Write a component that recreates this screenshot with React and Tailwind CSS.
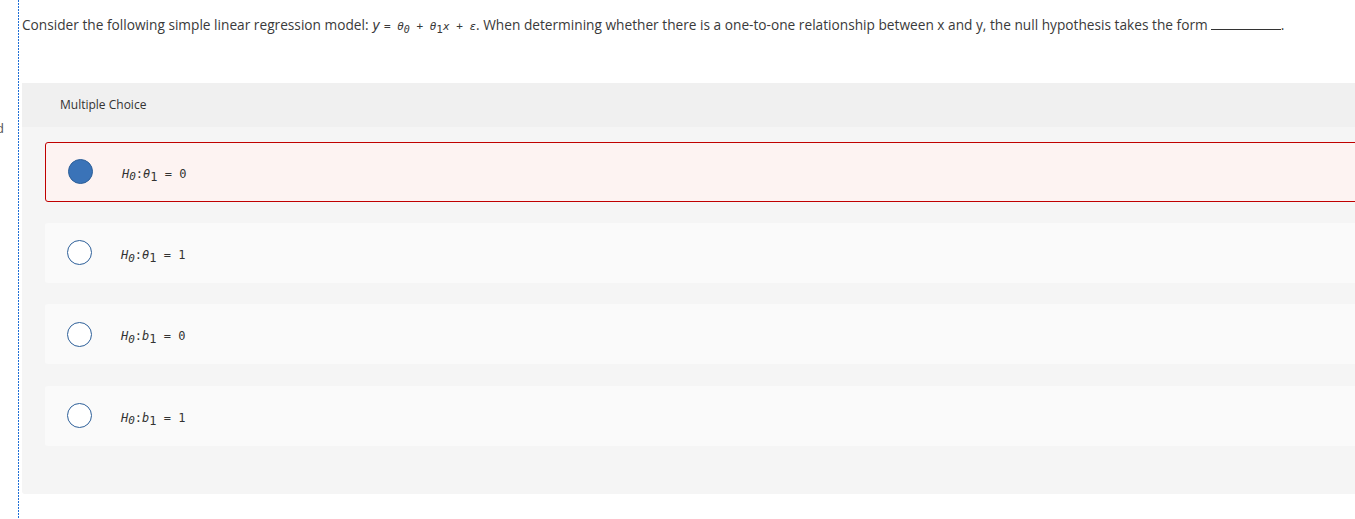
import React from 'react';

const mono = { fontFamily: '"DejaVu Sans Mono", "Liberation Mono", monospace' };

function Formula({ v, n }) {
  return (
    <span className="text-[12px] text-[#333]" style={mono}>
      <span className="italic">H</span>
      <sub className="text-[11px] italic">0</sub>:<span className="italic">{v}</span>
      <sub className="text-[12px]">1</sub> = {n}
    </span>
  );
}

const options = [
  { v: 'θ', n: '0', selected: true },
  { v: 'θ', n: '1' },
  { v: 'b', n: '0' },
  { v: 'b', n: '1' },
];

export default function App() {
  return (
    <div
      className="flex h-[519px] w-[1355px] overflow-hidden bg-white"
      style={{ fontFamily: '"Open Sans", Lato, sans-serif' }}
    >
      {/* clipped left column */}
      <div className="w-[18px] shrink-0 overflow-hidden">
        <div className="mt-[119px] ml-[-4px] text-[13px] text-[#555]">d</div>
      </div>
      {/* dotted focus line */}
      <div className="w-px shrink-0 bg-[repeating-linear-gradient(to_bottom,#1f6fd6_0_2px,transparent_2px_3px)]" />

      <div className="flex-1 min-w-0 pl-[3px]">
        <p className="mt-[15px] whitespace-nowrap text-[13.7px] text-[#3a3a3a]">
          Consider the following simple linear regression model: <span className="italic" style={mono}>y</span>{' '}
          <span style={mono} className="text-[11px]">
            = <span className="italic">θ</span><sub className="text-[10px] italic">0</sub> + <span className="italic">θ</span>
            <sub className="text-[11px]">1</sub><span className="italic">x</span> + <span className="italic">ε</span>
          </span>
          . When determining whether there is a one-to-one relationship between x and y, the null hypothesis takes the form
          <span className="ml-[3px] inline-block w-[70px] border-b border-[#333] align-baseline" />.
        </p>

        <div className="mt-[47px] mr-[-20px] rounded-tl-[3px] rounded-bl-[3px] bg-[#f5f5f5] pb-[48px]">
          <div className="flex h-[44px] items-center bg-[#f0f0f0] pl-[38px] text-[12px] text-[#333]">
            Multiple Choice
          </div>
          <div className="flex flex-col gap-[21.4px] pt-[15px] pl-[23px]">
            {options.map((o, i) => (
              <div
                key={i}
                className={
                  'flex h-[60px] items-center rounded-[3px] pl-[22px] ' +
                  (o.selected ? 'border border-[#c00000] bg-[#fdf3f2]' : 'bg-[#fafafa]')
                }
              >
                <span
                  className={
                    'h-[25px] w-[25px] shrink-0 rounded-full ' +
                    (o.selected ? 'bg-[#3a73b8] border border-[#2d5f99]' : 'border border-[#2d5f99] bg-white')
                  }
                />
                <span className="ml-[29px]">
                  <Formula v={o.v} n={o.n} />
                </span>
              </div>
            ))}
          </div>
        </div>
      </div>
    </div>
  );
}
